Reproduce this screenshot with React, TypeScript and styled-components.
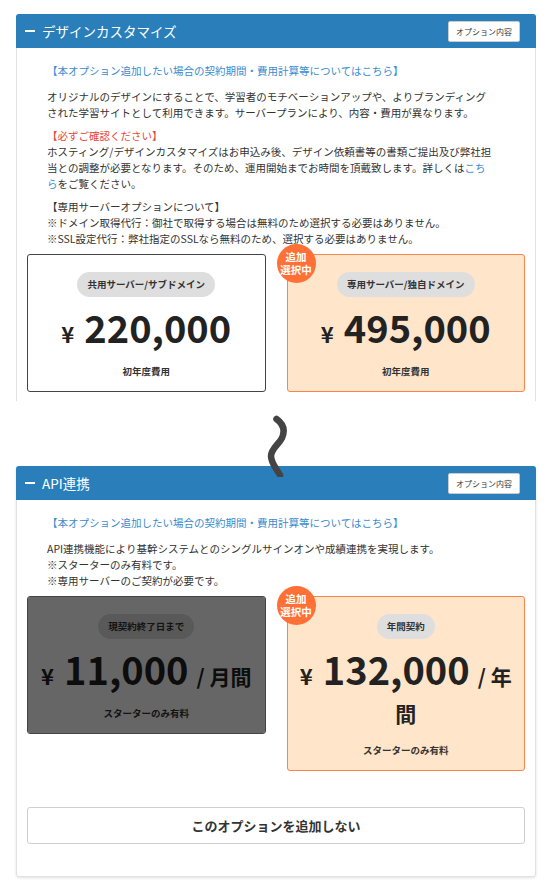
import React from 'react';
import styled, { createGlobalStyle, css } from 'styled-components';

const GlobalStyle = createGlobalStyle`
  body {
    margin: 0;
    background: #fff;
    font-family: "Noto Sans CJK JP", "Noto Sans", sans-serif;
    color: #333;
  }
`;

const Page = styled.div`
  width: 520px;
  padding: 14px 14px 12px 16px;
`;

const Panel = styled.section<{ $cut?: boolean }>`
  position: relative;
  border: 1px solid #e2e2e2;
  border-radius: 3px;
  background: #fff;
  box-shadow: 0 1px 3px rgba(0, 0, 0, 0.12);
  ${(p) =>
    p.$cut &&
    css`
      border-bottom: none;
      border-radius: 3px 3px 0 0;
      box-shadow: none;
    `}
`;

const Header = styled.header`
  height: 34px;
  margin: -1px -1px 0;
  padding: 0 16px 0 9px;
  display: flex;
  align-items: center;
  justify-content: space-between;
  background: #2a7fba;
  border-radius: 3px 3px 0 0;
`;

const Title = styled.h2`
  margin: 0;
  display: flex;
  align-items: center;
  gap: 7px;
  color: #fff;
  font-size: 13.5px;
  font-weight: 400;
`;

const Dash = styled.span`
  width: 10px;
  height: 2.5px;
  background: #fff;
`;

const DetailButton = styled.button`
  height: 21px;
  padding: 0 7px;
  border: 1px solid #ccc;
  border-radius: 2px;
  background: #fff;
  color: #333;
  font-family: inherit;
  font-size: 8px;
`;

const Body = styled.div<{ $bottom: number }>`
  padding: 0 10px ${(p) => p.$bottom}px;
`;

const Info = styled.div`
  padding: 15px 0 0 20px;
`;

const Para = styled.p<{ $tone?: 'link' | 'alert' }>`
  margin: 0 0 7px;
  font-size: 10.5px;
  line-height: 16px;
  white-space: nowrap;
  color: ${(p) => (p.$tone === 'link' ? '#3a8ccf' : '#333')};
  ${(p) =>
    p.$tone === 'link' &&
    css`
      margin-bottom: 10px;
    `}
`;

const Alert = styled.span`
  color: #e8453c;
`;

const Link = styled.span`
  color: #3a8ccf;
`;

const Cards = styled.div`
  margin-top: 4px;
  display: grid;
  grid-template-columns: 1fr 1fr;
  gap: 21px;
  align-items: start;
`;

const Card = styled.div<{ $selected?: boolean; $dimmed?: boolean }>`
  position: relative;
  padding: 14px 5px 12px;
  border: 1px solid ${(p) => (p.$selected ? '#f8854f' : '#444')};
  border-radius: 3px;
  background: ${(p) => (p.$selected ? '#ffe5c9' : '#fff')};
  text-align: center;
  ${(p) =>
    p.$dimmed &&
    css`
      &::after {
        content: '';
        position: absolute;
        inset: 0;
        border-radius: 2px;
        background: rgba(0, 0, 0, 0.6);
      }
    `}
`;

const Pill = styled.span`
  display: inline-block;
  height: 25px;
  padding: 0 10px;
  border-radius: 13px;
  background: #dedede;
  font-size: 9.5px;
  font-weight: 700;
  line-height: 25px;
  color: #333;
`;

const Price = styled.div`
  margin-top: 11px;
  font-size: 38px;
  font-weight: 700;
  line-height: 37px;
  color: #222;
`;

const Yen = styled.span`
  font-size: 22px;
  line-height: 0;
  margin-right: 10px;
`;

const Amount = styled.span`
  line-height: 37px;
`;

const Unit = styled.span`
  font-size: 21px;
  line-height: 0;
  margin-left: 8px;
`;

const Note = styled.div`
  margin-top: 18px;
  font-size: 9.5px;
  font-weight: 700;
  line-height: 16px;
  color: #333;
`;

const Badge = styled.div`
  position: absolute;
  left: -11px;
  top: -11px;
  width: 39px;
  height: 39px;
  border-radius: 50%;
  background: #ff7037;
  color: #fff;
  font-size: 10.5px;
  font-weight: 700;
  line-height: 12.5px;
  display: flex;
  flex-direction: column;
  align-items: center;
  justify-content: center;
  z-index: 1;
`;

const Divider = styled.div`
  position: relative;
  height: 65px;
`;

const Squiggle = styled.svg`
  position: absolute;
  left: 50%;
  top: 10px;
  margin-left: -14px;
  z-index: 2;
`;

const DeclineButton = styled.button`
  display: block;
  width: 100%;
  height: 37px;
  margin-top: 36px;
  border: 1px solid #cfcfcf;
  border-radius: 3px;
  background: #fff;
  color: #333;
  font-family: inherit;
  font-size: 13px;
  font-weight: 700;
`;

type Plan = {
  label: string;
  amount: string;
  unit?: string;
  note: string;
  selected?: boolean;
  dimmed?: boolean;
};

const PlanCard = ({ plan }: { plan: Plan }) => (
  <Card $selected={plan.selected} $dimmed={plan.dimmed}>
    {plan.selected && (
      <Badge>
        <span>追加</span>
        <span>選択中</span>
      </Badge>
    )}
    <Pill>{plan.label}</Pill>
    <Price>
      <Yen>¥</Yen>
      <Amount>{plan.amount}</Amount>
      {plan.unit && <Unit>/ {plan.unit}</Unit>}
    </Price>
    <Note>{plan.note}</Note>
  </Card>
);

const PanelHead = ({ title }: { title: string }) => (
  <Header>
    <Title>
      <Dash />
      {title}
    </Title>
    <DetailButton>オプション内容</DetailButton>
  </Header>
);

const designPlans: Plan[] = [
  { label: '共用サーバー/サブドメイン', amount: '220,000', note: '初年度費用' },
  { label: '専用サーバー/独自ドメイン', amount: '495,000', note: '初年度費用', selected: true },
];

const apiPlans: Plan[] = [
  { label: '現契約終了日まで', amount: '11,000', unit: '月間', note: 'スターターのみ有料', dimmed: true },
  { label: '年間契約', amount: '132,000', unit: '年間', note: 'スターターのみ有料', selected: true },
];

const contractLink = '【本オプション追加したい場合の契約期間・費用計算等についてはこちら】';

export default function App() {
  return (
    <>
      <GlobalStyle />
      <Page>
        <Panel $cut>
          <PanelHead title="デザインカスタマイズ" />
          <Body $bottom={9}>
            <Info>
              <Para $tone="link">{contractLink}</Para>
              <Para>
                オリジナルのデザインにすることで、学習者のモチベーションアップや、よりブランディング
                <br />
                された学習サイトとして利用できます。サーバープランにより、内容・費用が異なります。
              </Para>
              <Para>
                <Alert>【必ずご確認ください】</Alert>
                <br />
                ホスティング/デザインカスタマイズはお申込み後、デザイン依頼書等の書類ご提出及び弊社担
                <br />
                当との調整が必要となります。そのため、運用開始までお時間を頂戴致します。詳しくは
                <Link>こち</Link>
                <br />
                <Link>ら</Link>をご覧ください。
              </Para>
              <Para>
                【専用サーバーオプションについて】
                <br />
                ※ドメイン取得代行：御社で取得する場合は無料のため選択する必要はありません。
                <br />
                ※SSL設定代行：弊社指定のSSLなら無料のため、選択する必要はありません。
              </Para>
            </Info>
            <Cards>
              {designPlans.map((p) => (
                <PlanCard key={p.label} plan={p} />
              ))}
            </Cards>
          </Body>
        </Panel>

        <Divider>
          <Squiggle width="30" height="66" viewBox="0 0 30 66">
            <path
              d="M14.5 8 C20 12, 24 18, 20 27 C17 33, 9 38, 9 45 C9 52, 14 57, 18 64"
              fill="none"
              stroke="#444"
              strokeWidth="6.5"
              strokeLinecap="round"
            />
          </Squiggle>
        </Divider>

        <Panel>
          <PanelHead title="API連携" />
          <Body $bottom={32}>
            <Info>
              <Para $tone="link">{contractLink}</Para>
              <Para>
                API連携機能により基幹システムとのシングルサインオンや成績連携を実現します。
                <br />
                ※スターターのみ有料です。
                <br />
                ※専用サーバーのご契約が必要です。
              </Para>
            </Info>
            <Cards>
              {apiPlans.map((p) => (
                <PlanCard key={p.label} plan={p} />
              ))}
            </Cards>
            <DeclineButton>このオプションを追加しない</DeclineButton>
          </Body>
        </Panel>
      </Page>
    </>
  );
}
